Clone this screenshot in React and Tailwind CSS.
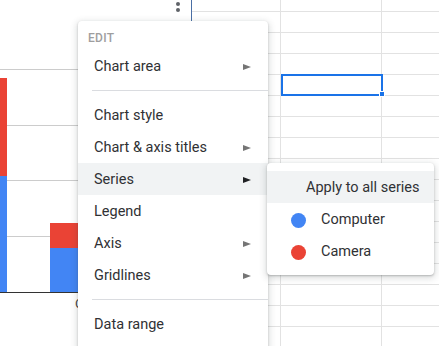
import React from 'react'

const menuItems = [
  { label: 'Chart style' },
  { label: 'Chart & axis titles', arrow: true },
  { label: 'Series', arrow: true, active: true },
  { label: 'Legend' },
  { label: 'Axis', arrow: true },
  { label: 'Gridlines', arrow: true },
]

function Arrow({ dark }) {
  return (
    <svg width="8" height="8" viewBox="0 0 8 8" className="shrink-0">
      <path d="M0 1 L8 4 L0 7 Z" fill={dark ? '#202124' : '#757575'} />
    </svg>
  )
}

function MenuRow({ label, arrow, active }) {
  return (
    <div className={`flex h-8 items-center justify-between pl-4 pr-[17px] pt-[2px] ${active ? 'bg-[#f1f3f4]' : ''}`}>
      <span>{label}</span>
      {arrow && <Arrow dark={active} />}
    </div>
  )
}

function Chart() {
  return (
    <svg width="191" height="346" className="shrink-0">
      {[69, 125, 180, 236].map(y => (
        <line key={y} x1="0" x2="191" y1={y + 0.5} y2={y + 0.5} stroke="#cccccc" />
      ))}
      <rect x="0" y="78" width="7" height="98" fill="#ea4335" />
      <rect x="0" y="176" width="7" height="116" fill="#4285f4" />
      <rect x="50" y="223" width="40" height="25" fill="#ea4335" />
      <rect x="50" y="248" width="40" height="44" fill="#4285f4" />
      <line x1="0" x2="191" y1="292.5" y2="292.5" stroke="#333333" />
      <text x="75" y="308" fontSize="13" fill="#444" fontFamily="Roboto, sans-serif">C</text>
      <circle cx="178" cy="4" r="2" fill="#5f6368" />
      <circle cx="178" cy="10" r="2" fill="#5f6368" />
    </svg>
  )
}

function Grid() {
  const rows = Array.from({ length: 16 })
  return (
    <div className="flex flex-1 flex-col border-l border-[#4a6fa5]">
      <div className="flex h-[12px] shrink-0 border-b border-[#e2e2e2]">
        <div className="w-[89px] border-r border-[#e2e2e2]" />
        <div className="w-[101px] border-r border-[#e2e2e2]" />
        <div className="flex-1" />
      </div>
      {rows.map((_, i) => (
        <div key={i} className="flex h-[21px] shrink-0 border-b border-[#e2e2e2]">
          <div className="w-[89px] border-r border-[#e2e2e2]" />
          <div className="w-[101px] border-r border-[#e2e2e2]" />
          <div className="flex-1" />
        </div>
      ))}
    </div>
  )
}

export default function App() {
  return (
    <div className="relative flex h-[346px] w-[439px] overflow-hidden bg-white text-[14.5px] text-[#303134]" style={{ fontFamily: 'Roboto, "Liberation Sans", sans-serif' }}>
      <Chart />
      <Grid />

      {/* selected cell */}
      <div className="absolute left-[281px] top-[74px] h-[22px] w-[102px] border-2 border-[#1a73e8]" />
      <div className="absolute left-[379px] top-[91px] h-[6px] w-[6px] border border-white bg-[#1a73e8]" />

      {/* context menu */}
      <div className="absolute left-[78px] top-[21px] w-[190px] rounded-[4px] bg-white shadow-[0_2px_6px_2px_rgba(60,64,67,0.15),0_1px_2px_rgba(60,64,67,0.3)]">
        <div className="h-[29px] pl-[10px] pt-[11px] text-[12px] font-medium leading-none tracking-[0.3px] text-[#9e9e9e]">EDIT</div>
        <MenuRow label="Chart area" arrow />
        <div className="ml-[14px] py-2">
          <div className="h-px bg-[#dadce0]" />
        </div>
        {menuItems.map(item => (
          <MenuRow key={item.label} {...item} />
        ))}
        <div className="ml-[14px] py-2">
          <div className="h-px bg-[#dadce0]" />
        </div>
        <MenuRow label="Data range" />
        <div className="h-4" />
      </div>

      {/* series submenu */}
      <div className="absolute left-[267px] top-[163px] w-[167px] rounded-[4px] bg-white py-2 shadow-[0_2px_6px_2px_rgba(60,64,67,0.15),0_1px_2px_rgba(60,64,67,0.3)]">
        <div className="flex h-8 items-center bg-[#f1f3f4] pl-[39px] pt-[2px]">Apply to all series</div>
        <div className="flex h-8 items-center pl-[24px] pt-[2px]">
          <span className="h-[15px] w-[15px] rounded-full bg-[#4285f4]" />
          <span className="ml-[15px]">Computer</span>
        </div>
        <div className="flex h-8 items-center pl-[24px] pt-[2px]">
          <span className="h-[15px] w-[15px] rounded-full bg-[#ea4335]" />
          <span className="ml-[15px]">Camera</span>
        </div>
      </div>
    </div>
  )
}
